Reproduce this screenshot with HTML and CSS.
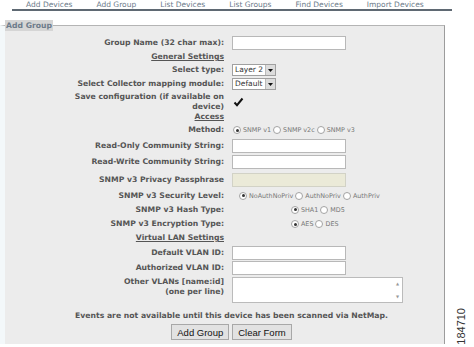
FILE: index.html
```html
<!DOCTYPE html>
<html lang="en">
  <head>
	<meta charset="UTF-8" />
	<title>Add Group</title>
	<link rel="stylesheet" href="styles.css">
  </head>
  <body>

	<div class="tabs">
	  <a>Add Devices</a>
	  <a>Add Group</a>
	  <a>List Devices</a>
	  <a>List Groups</a>
	  <a>Find Devices</a>
	  <a>Import Devices</a>
	</div>

	<div class="page">
	  <fieldset class="box">
		<legend>Add Group</legend>

		<div class="form">
		  <div class="lbl">Group Name (32 char max):</div>
		  <div><input type="text" class="txt"></div>

		  <div class="lbl head">General Settings</div>
		  <div></div>

		  <div class="lbl">Select type:</div>
		  <div><span class="sel"><span class="t">Layer 2</span><span class="arr"><svg width="5" height="3" viewBox="0 0 5 3"><path d="M0 0h5L2.5 3z" fill="#111"/></svg></span></span></div>

		  <div class="lbl">Select Collector mapping module:</div>
		  <div><span class="sel"><span class="t">Default</span><span class="arr"><svg width="5" height="3" viewBox="0 0 5 3"><path d="M0 0h5L2.5 3z" fill="#111"/></svg></span></span></div>

		  <div class="lbl">Save configuration (if available on device)</div>
		  <div><svg class="check" width="11" height="10" viewBox="0 0 11 10"><path d="M1.5 5.5L4 8.2L9.5 1.5" fill="none" stroke="#111" stroke-width="2"/></svg></div>

		  <div class="lbl head">Access</div>
		  <div></div>

		  <div class="lbl">Method:</div>
		  <div class="opts">
			<span class="radio on"></span><span class="opt">SNMP v1</span>
			<span class="radio"></span><span class="opt">SNMP v2c</span>
			<span class="radio"></span><span class="opt">SNMP v3</span>
		  </div>

		  <div class="lbl">Read-Only Community String:</div>
		  <div><input type="text" class="txt"></div>

		  <div class="lbl">Read-Write Community String:</div>
		  <div><input type="text" class="txt"></div>

		  <div class="lbl">SNMP v3 Privacy Passphrase</div>
		  <div><input type="text" class="txt off" disabled></div>

		  <div class="lbl">SNMP v3 Security Level:</div>
		  <div class="opts level">
			<span class="radio on"></span><span class="opt">NoAuthNoPriv</span>
			<span class="radio"></span><span class="opt">AuthNoPriv</span>
			<span class="radio"></span><span class="opt">AuthPriv</span>
		  </div>

		  <div class="lbl">SNMP v3 Hash Type:</div>
		  <div class="opts inset">
			<span class="radio on"></span><span class="opt">SHA1</span>
			<span class="radio"></span><span class="opt">MD5</span>
		  </div>

		  <div class="lbl">SNMP v3 Encryption Type:</div>
		  <div class="opts inset">
			<span class="radio on"></span><span class="opt">AES</span>
			<span class="radio"></span><span class="opt">DES</span>
		  </div>

		  <div class="lbl head">Virtual LAN Settings</div>
		  <div></div>

		  <div class="lbl">Default VLAN ID:</div>
		  <div><input type="text" class="txt"></div>

		  <div class="lbl">Authorized VLAN ID:</div>
		  <div><input type="text" class="txt"></div>

		  <div class="lbl top">Other VLANs [name:id]<br>(one per line)</div>
		  <div class="area">
			<span class="scroll"><span>&#9650;</span><span>&#9660;</span></span>
		  </div>
		</div>

		<div class="note">Events are not available until this device has been scanned via NetMap.</div>

		<div class="btns">
		  <button class="btn">Add Group</button>
		  <button class="btn">Clear Form</button>
		</div>
	  </fieldset>

	  <div class="fig">184710</div>
	</div>

  </body>
</html>
```

FILE: styles.css
```css
* {
  box-sizing: border-box;
  margin: 0;
  padding: 0;
}
body {
  font-family: "DejaVu Sans", Verdana, sans-serif;
  background: #fff;
  color: #555;
  overflow: hidden;
}
.tabs {
  display: flex;
  gap: 24px;
  margin: 0 22px 0 12px;
  padding-left: 14px;
  height: 11px;
  border-bottom: 2px solid #5f6973;
  font-size: 7.5px;
  line-height: 9px;
  color: #6b7a8a;
}
.page {
  display: flex;
  height: 336px;
}
.box {
  width: 445px;
  margin-top: 9px;
  align-self: flex-start;
  border: 0;
  border-top: 1px solid #b4b4b4;
  border-right: 1px solid #9c9c9c;
  border-left: 5px solid #f3f8fa;
  background: #ececec;
  padding: 0 0 4px;
}
.box legend {
  padding: 1px 1px;
  background: #d5d5d5;
  color: #6d7c8b;
  font-weight: bold;
  font-size: 7.7px;
  line-height: 9px;
}
.form {
  display: grid;
  grid-template-columns: 219px 1fr;
  grid-template-rows: 16px 12px 14px 14px 21px 10px 16px 15px 17px 19px 13px 15px 14px 14px 15px 15px 30px;
  column-gap: 8px;
  align-items: center;
  padding-top: 4px;
}
.lbl {
  padding-left: 63px;
  text-align: right;
  font-weight: bold;
  font-size: 7.7px;
  line-height: 10px;
  color: #555;
}
.lbl.head {
  text-decoration: underline;
}
.lbl.top {
  align-self: start;
  padding-top: 2px;
}
.txt {
  display: block;
  width: 114px;
  height: 14px;
  border: 1px solid #b8b8b8;
  background: #fff;
}
.txt.off {
  background: #ebead8;
  border-color: #d2d2c6;
}
.sel {
  display: flex;
  width: 44px;
  height: 12px;
  border: 1px solid #a0a0a0;
  background: #fff;
  font-size: 7.5px;
  line-height: 10px;
  color: #333;
}
.sel .t {
  flex: 1;
  padding-left: 2px;
  overflow: hidden;
  white-space: nowrap;
}
.sel .arr {
  width: 10px;
  display: flex;
  align-items: center;
  justify-content: center;
  background: #dcdcdc;
  border-left: 1px solid #bbb;
}
.check {
  display: block;
  margin-left: 1px;
}
.opts {
  display: flex;
  align-items: center;
  padding-left: 1px;
  font-size: 6.4px;
  color: #777;
}
.opts.level {
  padding-left: 7px;
}
.opts.inset {
  padding-left: 59px;
}
.radio {
  width: 8px;
  height: 8px;
  margin-right: 2px;
  border: 1px solid #a3a3a3;
  border-radius: 50%;
  background: #fff;
  display: flex;
  align-items: center;
  justify-content: center;
}
.radio.on::after {
  content: "";
  width: 3px;
  height: 3px;
  border-radius: 50%;
  background: #333;
}
.opt {
  margin-right: 2px;
}
.area {
  display: flex;
  justify-content: flex-end;
  width: 171px;
  height: 26px;
  border: 1px solid #bbb;
  background: #fff;
}
.scroll {
  width: 9px;
  display: flex;
  flex-direction: column;
  justify-content: space-between;
  align-items: center;
  padding: 3px 0;
  font-size: 4px;
  line-height: 5px;
  color: #999;
}
.note {
  margin-top: 6px;
  padding-left: 14px;
  text-align: center;
  font-weight: bold;
  font-size: 7.7px;
  line-height: 10px;
}
.btns {
  display: flex;
  justify-content: center;
  gap: 3px;
  margin-top: 3px;
  padding-left: 14px;
}
.btn {
  height: 16px;
  padding: 0 5px;
  font-family: "Liberation Sans", Arial, sans-serif;
  font-size: 9.5px;
  color: #111;
  background: #e2e2e2;
  border: 1px solid #a8a8a8;
}
.fig {
  align-self: flex-end;
  margin-left: 11px;
  margin-bottom: 2px;
  writing-mode: vertical-rl;
  transform: rotate(180deg);
  font-family: "Liberation Sans", Arial, sans-serif;
  font-size: 11px;
  line-height: 11px;
  color: #333;
}
```
